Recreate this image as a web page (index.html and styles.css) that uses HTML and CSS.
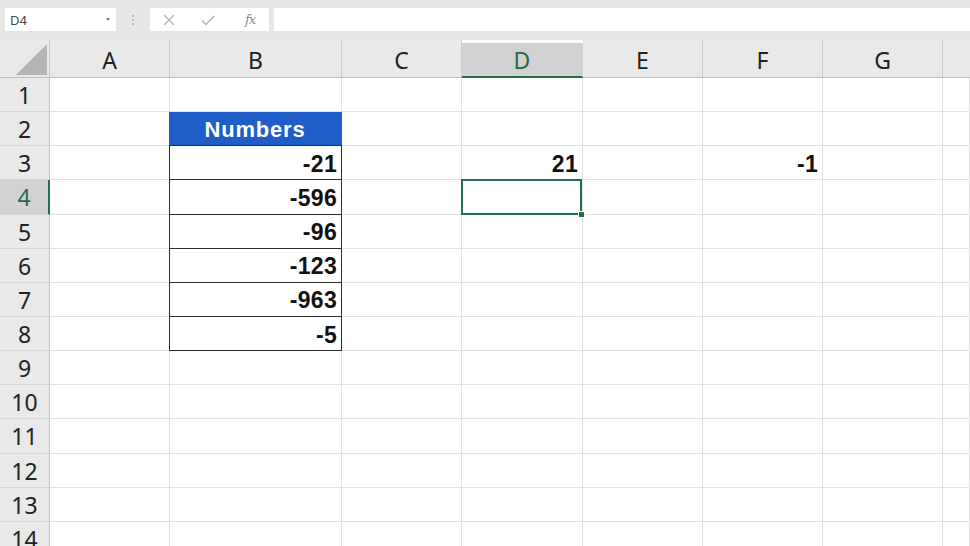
FILE: index.html
```html
<!DOCTYPE html>
<html>
<head>
<meta charset="utf-8">
<link rel="stylesheet" href="styles.css">
</head>
<body>
<div class="app">
  <div class="toolbar">
    <div class="namebox"><span class="ref">D4</span><span class="caret"></span></div>
    <div class="dots"><i></i><i></i><i></i></div>
    <div class="fnbox">
      <svg class="ic" width="14" height="14" viewBox="0 0 14 14"><path d="M2 2 L12 12 M12 2 L2 12" stroke="#b3b3b3" stroke-width="1.3" fill="none"/></svg>
      <svg class="ic" width="16" height="14" viewBox="0 0 16 14"><path d="M2 7.5 L6 11.5 L14 3" stroke="#b3b3b3" stroke-width="1.4" fill="none"/></svg>
      <span class="fx">fx</span>
    </div>
    <div class="formula"></div>
  </div>
  <div class="sheet">
    <div class="corner"><svg width="31" height="31" viewBox="0 0 31 31"><polygon points="0,31 31,0 31,31" fill="#b5b5b5"/></svg></div>
    <div class="ch">A</div><div class="ch">B</div><div class="ch">C</div><div class="ch sel">D</div><div class="ch">E</div><div class="ch">F</div><div class="ch">G</div><div class="ch last"></div>

    <div class="rh">1</div><div class="c"></div><div class="c"></div><div class="c"></div><div class="c"></div><div class="c"></div><div class="c"></div><div class="c"></div><div class="c"></div>
    <div class="rh">2</div><div class="c"></div><div class="c head">Numbers</div><div class="c"></div><div class="c"></div><div class="c"></div><div class="c"></div><div class="c"></div><div class="c"></div>
    <div class="rh">3</div><div class="c"></div><div class="c tb">-21</div><div class="c"></div><div class="c num">21</div><div class="c"></div><div class="c num">-1</div><div class="c"></div><div class="c"></div>
    <div class="rh sel">4</div><div class="c"></div><div class="c tb">-596</div><div class="c"></div><div class="c active"></div><div class="c"></div><div class="c"></div><div class="c"></div><div class="c"></div>
    <div class="rh">5</div><div class="c"></div><div class="c tb">-96</div><div class="c"></div><div class="c"></div><div class="c"></div><div class="c"></div><div class="c"></div><div class="c"></div>
    <div class="rh">6</div><div class="c"></div><div class="c tb">-123</div><div class="c"></div><div class="c"></div><div class="c"></div><div class="c"></div><div class="c"></div><div class="c"></div>
    <div class="rh">7</div><div class="c"></div><div class="c tb">-963</div><div class="c"></div><div class="c"></div><div class="c"></div><div class="c"></div><div class="c"></div><div class="c"></div>
    <div class="rh">8</div><div class="c"></div><div class="c tb">-5</div><div class="c"></div><div class="c"></div><div class="c"></div><div class="c"></div><div class="c"></div><div class="c"></div>
    <div class="rh">9</div><div class="c"></div><div class="c"></div><div class="c"></div><div class="c"></div><div class="c"></div><div class="c"></div><div class="c"></div><div class="c"></div>
    <div class="rh">10</div><div class="c"></div><div class="c"></div><div class="c"></div><div class="c"></div><div class="c"></div><div class="c"></div><div class="c"></div><div class="c"></div>
    <div class="rh">11</div><div class="c"></div><div class="c"></div><div class="c"></div><div class="c"></div><div class="c"></div><div class="c"></div><div class="c"></div><div class="c"></div>
    <div class="rh">12</div><div class="c"></div><div class="c"></div><div class="c"></div><div class="c"></div><div class="c"></div><div class="c"></div><div class="c"></div><div class="c"></div>
    <div class="rh">13</div><div class="c"></div><div class="c"></div><div class="c"></div><div class="c"></div><div class="c"></div><div class="c"></div><div class="c"></div><div class="c"></div>
    <div class="rh">14</div><div class="c"></div><div class="c"></div><div class="c"></div><div class="c"></div><div class="c"></div><div class="c"></div><div class="c"></div><div class="c"></div>
  </div>
</div>
</body>
</html>
```

FILE: styles.css
```css
* { box-sizing: border-box; }
html, body { margin: 0; padding: 0; }
body {
  width: 970px;
  height: 546px;
  overflow: hidden;
  background: #ffffff;
  font-family: "Noto Sans", "Open Sans", sans-serif;
}
.app { width: 970px; height: 546px; overflow: hidden; }

.toolbar {
  height: 40px;
  background: #e6e6e6;
  display: flex;
  align-items: flex-start;
  padding-top: 8px;
}
.namebox {
  margin-left: 5px;
  width: 111px;
  height: 23px;
  background: #fff;
  display: flex;
  align-items: center;
  justify-content: space-between;
  padding: 0 6px 0 5px;
}
.ref { font-size: 13px; color: #444; }
.caret {
  width: 0; height: 0;
  border-left: 2.5px solid transparent;
  border-right: 2.5px solid transparent;
  border-top: 3px solid #777;
}
.dots {
  width: 34px;
  height: 23px;
  display: flex;
  flex-direction: column;
  align-items: center;
  justify-content: center;
  gap: 2px;
}
.dots i { display: block; width: 2px; height: 2px; border-radius: 1px; background: #b0b0b0; }
.fnbox {
  width: 119px;
  height: 23px;
  background: #fff;
  display: flex;
  align-items: center;
  padding-left: 12px;
  gap: 24px;
}
.fx {
  margin-left: 5px;
  font-family: "DejaVu Serif", "Liberation Serif", serif;
  font-style: italic;
  font-size: 13px;
  color: #8a8a8a;
  letter-spacing: -1px;
}
.formula {
  margin-left: 5px;
  flex: 1;
  height: 23px;
  background: #fff;
}

.sheet {
  display: grid;
  grid-template-columns: 50px 120px 172px 120px 121px 120px 120px 120px 1fr;
  grid-template-rows: 38px repeat(14, 34.15px);
}
.corner {
  background: #e9e9e9;
  border-right: 1px solid #c6c6c6;
  border-bottom: 1px solid #bdbdbd;
  display: flex;
  align-items: flex-end;
  justify-content: flex-end;
  padding: 0 2px 2px 0;
}
.corner svg { display: block; }
.ch {
  background: #e9e9e9;
  border-right: 1px solid #cdcdcd;
  border-bottom: 1px solid #bdbdbd;
  display: flex;
  align-items: center;
  justify-content: center;
  font-size: 23px;
  color: #222;
  padding-top: 3px;
}
.ch.last { border-right: none; }
.ch.sel {
  background: #d2d2d2;
  color: #2a6a48;
  border-bottom: 2px solid #217346;
  border-right-color: #d2d2d2;
  padding-top: 0;
  margin-top: 3px;
}
.rh {
  background: #e9e9e9;
  border-right: 1px solid #c6c6c6;
  border-bottom: 1px solid #d6d6d6;
  display: flex;
  align-items: center;
  justify-content: center;
  font-size: 23px;
  color: #222;
  padding-top: 1px;
}
.rh.sel {
  background: #d2d2d2;
  color: #2a6a48;
  border-right: 2px solid #217346;
}
.c {
  border-right: 1px solid #e1e1e1;
  border-bottom: 1px solid #e1e1e1;
  display: flex;
  align-items: center;
  justify-content: flex-end;
  padding: 3px 4px 0 0;
  font-family: "Liberation Sans", Arial, sans-serif;
  font-weight: bold;
  font-size: 23px;
  color: #111;
  letter-spacing: 0.3px;
}
.c.head {
  background: #1f5ec8;
  border-right-color: #1f5ec8;
  border-bottom-color: #1f5ec8;
  margin-left: -1px;
  justify-content: center;
  color: #fff;
  font-size: 22px;
  letter-spacing: 0.8px;
  padding: 3px 0 0 0;
}
.c.tb {
  border: 1px solid #2b2b2b;
  margin-left: -1px;
  margin-top: -1px;
}
.c.active { position: relative; }
.c.active::before {
  content: "";
  position: absolute;
  left: -1px; top: -1px; right: 0; bottom: -1px;
  border: 2px solid #217346;
}
.c.active::after {
  content: "";
  position: absolute;
  right: -2px; bottom: -3px;
  width: 5px; height: 5px;
  background: #217346;
  outline: 1px solid #fff;
}
```
